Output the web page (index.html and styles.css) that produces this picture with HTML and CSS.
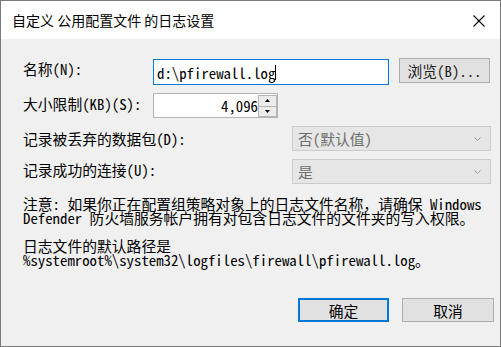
FILE: index.html
```html
<!DOCTYPE html>
<html lang="zh-CN">
<head>
<meta charset="utf-8">
<title>日志设置</title>
<link rel="stylesheet" href="styles.css">
</head>
<body>
<div class="window">
  <div class="titlebar">
    <span class="title">自定义 公用配置文件 的日志设置</span>
    <svg class="close" width="12" height="12" viewBox="0 0 12 12"><path d="M0.5 0.5 L11.5 11.5 M11.5 0.5 L0.5 11.5" stroke="#000" stroke-width="1.1" fill="none"/></svg>
  </div>
  <div class="body">
    <div class="row row-name">
      <label class="label label-fixed lift">名称(N):</label>
      <div class="edit focused"><span class="edit-text">d:\pfirewall.log</span><span class="caret"></span></div>
      <button class="btn btn-browse">浏览(B)...</button>
    </div>
    <div class="row row-size">
      <label class="label label-fixed lift">大小限制(KB)(S):</label>
      <div class="spin">
        <span class="spin-value">4,096</span>
        <span class="spin-buttons">
          <span class="spin-btn"><svg width="5" height="3" viewBox="0 0 5 3"><path d="M0 3 L2.5 0 L5 3 Z" fill="#000"/></svg></span>
          <span class="spin-btn"><svg width="5" height="3" viewBox="0 0 5 3"><path d="M0 0 L2.5 3 L5 0 Z" fill="#000"/></svg></span>
        </span>
      </div>
    </div>
    <div class="row row-combo">
      <label class="label">记录被丢弃的数据包(D):</label>
      <div class="combo"><span>否(默认值)</span><svg width="7" height="4" viewBox="0 0 7 4"><path d="M0.5 0.5 L3.5 3.5 L6.5 0.5" stroke="#9a9a9a" fill="none"/></svg></div>
    </div>
    <div class="row row-combo">
      <label class="label lift">记录成功的连接(U):</label>
      <div class="combo"><span>是</span><svg width="7" height="4" viewBox="0 0 7 4"><path d="M0.5 0.5 L3.5 3.5 L6.5 0.5" stroke="#9a9a9a" fill="none"/></svg></div>
    </div>
    <p class="text note">注意: 如果你正在配置组策略对象上的日志文件名称，请确保 Windows<br>Defender 防火墙服务帐户拥有对包含日志文件的文件夹的写入权限。</p>
    <p class="text path">日志文件的默认路径是<br>%systemroot%\system32\logfiles\firewall\pfirewall.log。</p>
    <div class="actions">
      <button class="btn btn-ok">确定</button>
      <button class="btn btn-cancel">取消</button>
    </div>
  </div>
</div>
</body>
</html>
```
FILE: styles.css
```css
* { box-sizing: border-box; }
html, body { margin: 0; padding: 0; }
body {
  width: 501px;
  height: 347px;
  overflow: hidden;
  background: #f0f0f0;
}
.window {
  width: 501px;
  height: 347px;
  border: 1px solid #7a7a7a;
  background: #f0f0f0;
  display: flex;
  flex-direction: column;
  font-family: "Noto Sans Mono CJK SC", "Noto Sans CJK SC", sans-serif;
  font-size: 14.8px;
  color: #000;
}
.titlebar {
  height: 38px;
  background: #fff;
  display: flex;
  align-items: center;
  justify-content: space-between;
  padding: 0 15px 0 11px;
  flex-shrink: 0;
}
.title {
  font-family: "Noto Sans CJK SC", sans-serif;
  font-size: 14px;
  line-height: 16px;
  margin-top: -1px;
}
.close { display: block; margin-top: 1px; }
.body {
  flex: 1;
  padding: 19px 9px 0 22px;
  display: flex;
  flex-direction: column;
}
.row {
  display: flex;
  align-items: center;
  height: 25px;
  margin-bottom: 8px;
  flex-shrink: 0;
}
.row-name { height: 27px; align-items: flex-start; }
.row-name .label { margin-top: 3px; }
.label {
  line-height: 15px;
  white-space: nowrap;
}
.label-fixed { width: 130px; flex-shrink: 0; }
.row-size .lift, .row-combo .lift { margin-bottom: 5px; }
.edit {
  width: 236px;
  height: 26px;
  margin-top: 1px;
  background: #fff;
  border: 1px solid #7a7a7a;
  display: flex;
  align-items: center;
  padding-left: 3px;
}
.edit.focused { border-color: #0078d7; }
.edit-text { line-height: 15px; }
.caret {
  display: inline-block;
  width: 1px;
  height: 15px;
  background: #000;
}
.btn {
  font: inherit;
  color: #000;
  background: #e1e1e1;
  border: 1px solid #adadad;
  padding: 0;
  margin: 0;
  line-height: 15px;
}
.btn-browse {
  width: 91px;
  height: 25px;
  margin-left: 10px;
  color: #222;
}
.spin {
  width: 125px;
  height: 25px;
  background: #fff;
  border: 1px solid #b4b4b4;
  display: flex;
  align-items: stretch;
}
.spin-value {
  flex: 1;
  text-align: right;
  line-height: 23px;
  padding-right: 0;
}
.spin-buttons {
  width: 19px;
  display: flex;
  flex-direction: column;
  padding: 1px 0 0 0;
}
.spin-btn {
  flex: 1;
  background: #ececec;
  border: 1px solid #b4b4b4;
  display: flex;
  align-items: center;
  justify-content: center;
}
.spin-btn + .spin-btn { border-top: none; }
.combo {
  margin-left: auto;
  width: 199px;
  height: 25px;
  background: #e6e6e6;
  border: 1px solid #cccccc;
  color: #6d6d6d;
  display: flex;
  align-items: center;
  justify-content: space-between;
  padding: 0 9px 0 5px;
  line-height: 15px;
}
.combo svg { display: block; }
.text {
  margin: 0;
  line-height: 14px;
  white-space: nowrap;
  flex-shrink: 0;
}
.note { margin-top: 5px; }
.path { margin-top: 14px; }
.actions {
  display: flex;
  justify-content: flex-end;
  gap: 13px;
  margin-top: 31px;
  margin-right: -3px;
  flex-shrink: 0;
}
.btn-ok {
  width: 91px;
  height: 24px;
  border: 2px solid #0078d7;
}
.btn-cancel {
  width: 92px;
  height: 24px;
}
```
